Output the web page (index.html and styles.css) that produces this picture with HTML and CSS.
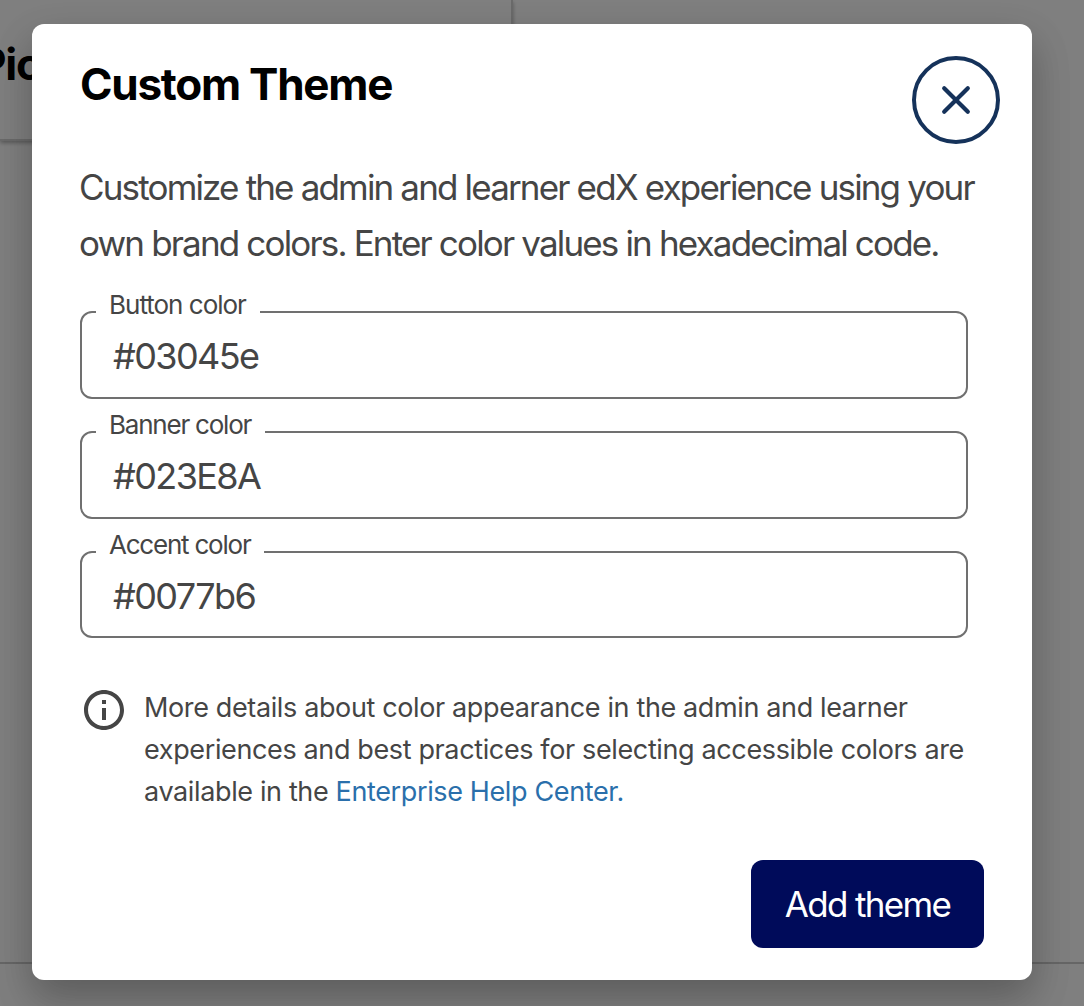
FILE: index.html
```html
<!DOCTYPE html>
<html lang="en">
<head>
    <meta charset="UTF-8">
    <title>Custom Theme</title>
    <link rel="stylesheet" href="styles.css">
</head>
<body>
    <div class="page">
        <div class="cards">
            <div class="card"><span class="card-title">Pic</span></div>
        </div>
        <div class="footer"></div>
    </div>
    <div class="backdrop">
        <div class="modal" role="dialog" aria-labelledby="modal-title">
            <div class="modal-header">
                <h2 id="modal-title" class="modal-title">Custom Theme</h2>
                <button class="close" aria-label="Close">
                    <svg width="48" height="48" viewBox="0 0 48 48"><path fill="none" stroke="currentColor" stroke-width="4.200" stroke-linecap="round" d="M12.200 12.200 35.800 35.800M35.800 12.200 12.200 35.800"/></svg>
                </button>
            </div>
            <p class="lead">Customize the admin and learner edX experience using your<br>own brand colors. Enter color values in hexadecimal code.</p>
            <div class="fields">
                <fieldset class="field">
                    <legend class="label">Button color</legend>
                    <input class="value" type="text" aria-label="Button color" value="#03045e">
                </fieldset>
                <fieldset class="field">
                    <legend class="label label-tight">Banner color</legend>
                    <input class="value" type="text" aria-label="Banner color" value="#023E8A">
                </fieldset>
                <fieldset class="field field-last">
                    <legend class="label label-tight">Accent color</legend>
                    <input class="value" type="text" aria-label="Accent color" value="#0077b6">
                </fieldset>
            </div>
            <div class="info">
                <svg class="info-icon" width="48" height="48" viewBox="0 0 24 24"><path fill="currentColor" d="M11 7h2v2h-2V7zm0 4h2v6h-2v-6zm1-9C6.48 2 2 6.48 2 12s4.480 10 10 10 10-4.480 10-10S17.520 2 12 2zm0 18c-4.410 0-8-3.590-8-8s3.590-8 8-8 8 3.590 8 8-3.590 8-8 8z"/></svg>
                <p class="info-text">More details about color appearance in the admin and learner<br>experiences and best practices for selecting accessible colors are<br>available in the <a class="link" href="#">Enterprise Help Center.</a></p>
            </div>
            <div class="modal-footer">
                <button class="submit">Add theme</button>
            </div>
        </div>
    </div>
</body>
</html>
```
FILE: styles.css
```css
* {
    box-sizing: border-box;
    margin: 0;
}

body {
    font-family: Inter, "Liberation Sans", sans-serif;
    color: #454545;
    background-color: white;
    overflow: hidden;
}

/* page behind the dialog */
.page {
    display: flex;
    flex-direction: column;
    justify-content: space-between;
    height: 1006px;
}

.cards {
    display: flex;
}

.card {
    width: 513px;
    height: 141px;
    padding-top: 36px;
    border: 2px solid #d4d4d4;
    border-width: 0 2px 2px 0;
    box-shadow: 0 2px 4px rgba(0,0,0,.3);
}

.card-title {
    display: block;
    margin-left: -22px;
    font-size: 44px;
    font-weight: 700;
    line-height: 56px;
    letter-spacing: -1.2px;
    color: black;
}

.footer {
    height: 44px;
    border-top: 2px solid #cccccc;
}

.backdrop {
    position: absolute;
    inset: 0;
    padding: 24px 52px 26px 32px;
    background-color: rgba(0,0,0,.5);
}

.modal {
    display: flex;
    flex-direction: column;
    height: 956px;
    padding: 32px 32px 32px 48px;
    border-radius: 12px;
    background-color: white;
    box-shadow: 0 20px 40px rgba(0,0,0,.15), 0 16px 40px rgba(0,0,0,.15);
}

.modal-header {
    display: flex;
    justify-content: space-between;
    height: 103px;
}

.modal-title {
    font-size: 44px;
    font-weight: 700;
    line-height: 57px;
    letter-spacing: -1.25px;
    color: black;
}

.close {
    display: flex;
    align-items: center;
    justify-content: center;
    width: 88px;
    height: 88px;
    padding: 0;
    border: 4px solid #15325a;
    border-radius: 50%;
    background-color: white;
    color: #15325a;
}

.lead {
    margin-left: -1px;
    font-size: 35px;
    line-height: 56px;
    letter-spacing: -1.84px;
    white-space: nowrap;
}

.fields {
    display: flex;
    flex-direction: column;
    gap: 17px;
    width: 888px;
    margin-top: 25px;
}

.field {
    height: 103px;
    min-width: 0;
    padding: 0 14px;
    border: 2px solid #707070;
    border-radius: 12px;
}

.field-last {
    height: 102px;
}

.label {
    height: 32px;
    padding: 0 14px 0 13px;
    font-size: 26px;
    line-height: 17px;
    letter-spacing: -1px;
}

.label-tight {
    letter-spacing: -1.22px;
}

.value {
    display: block;
    width: 100%;
    height: 55px;
    padding: 0 17px;
    border: none;
    outline: none;
    background: none;
    font: 36px Inter, "Liberation Sans", sans-serif;
    letter-spacing: -1.6px;
    color: #454545;
}

.info {
    display: flex;
    gap: 16px;
    margin-top: 48px;
}

.info-icon {
    flex-shrink: 0;
}

.info-text {
    padding-top: 1px;
    font-size: 27px;
    line-height: 42px;
    letter-spacing: -0.37px;
    white-space: nowrap;
}

.link {
    color: #2a6fab;
    text-decoration: none;
}

.modal-footer {
    display: flex;
    justify-content: flex-end;
    margin-top: auto;
    padding-right: 16px;
}

.submit {
    width: 233px;
    height: 88px;
    border: none;
    border-radius: 12px;
    background-color: #000b5a;
    font: 35px Inter, "Liberation Sans", sans-serif;
    letter-spacing: -1.65px;
    color: white;
}
```
